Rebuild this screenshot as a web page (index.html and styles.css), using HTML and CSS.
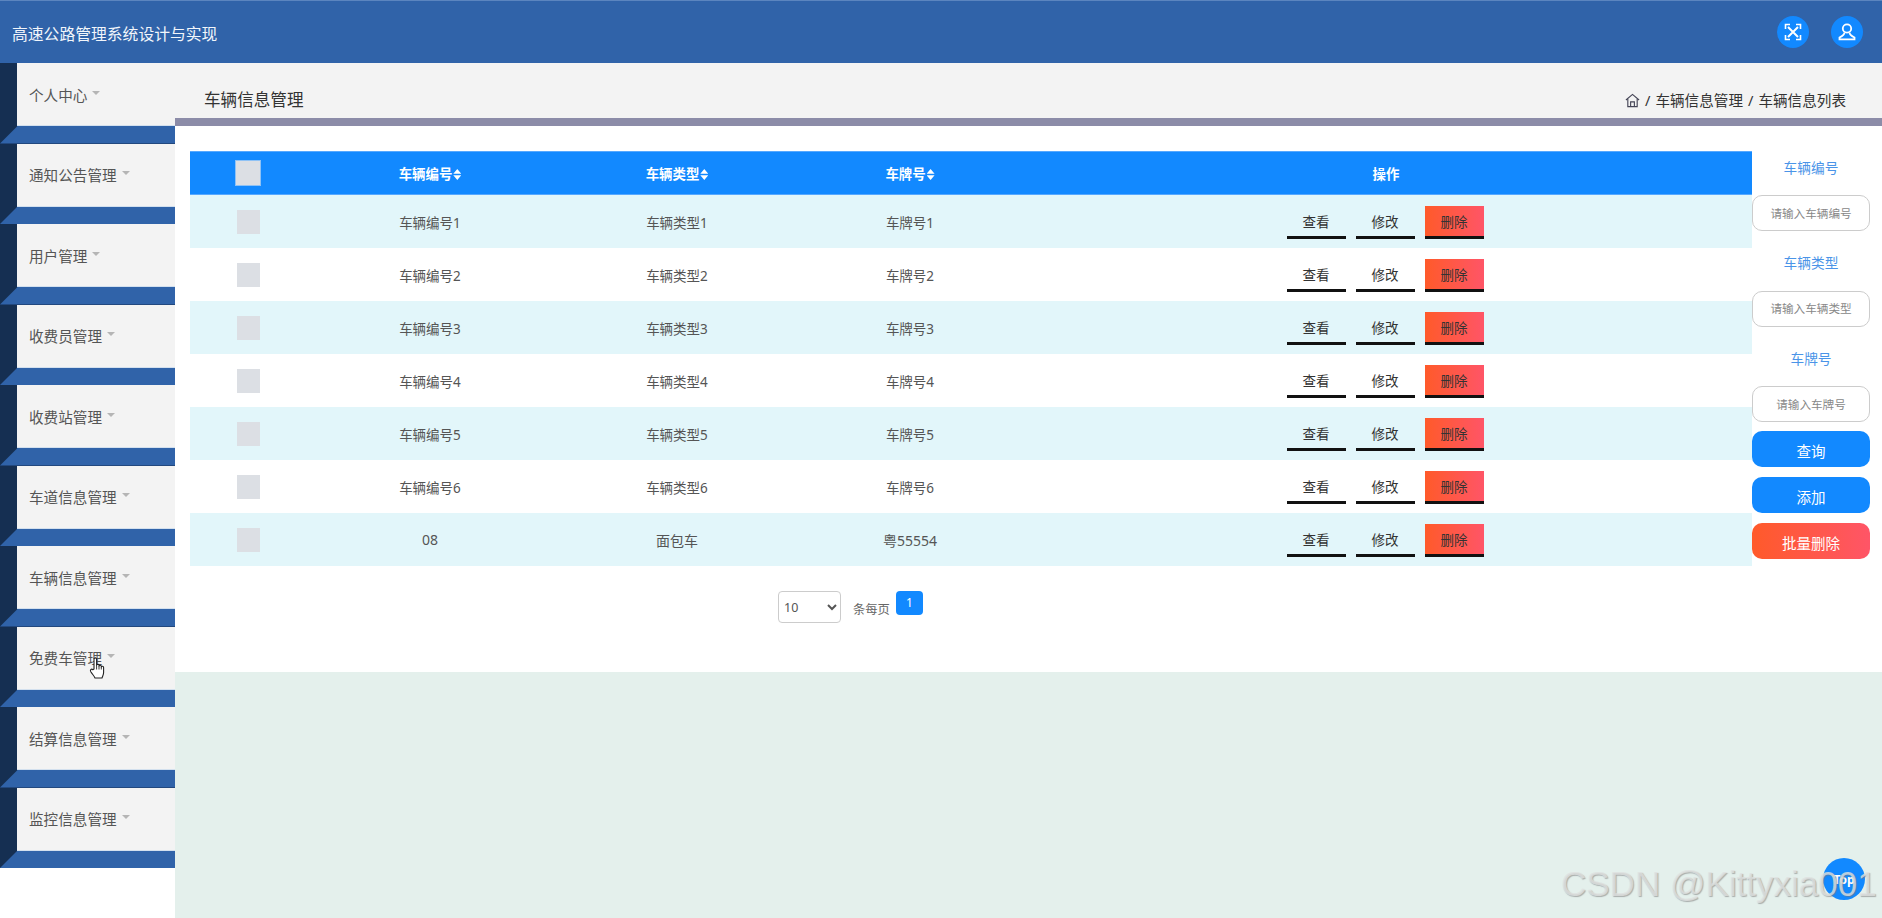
FILE: index.html
```html
<!DOCTYPE html>
<html lang="zh">
<head>
<meta charset="utf-8">
<title>高速公路管理系统设计与实现</title>
<link rel="stylesheet" href="styles.css">
</head>
<body>
<div class="page">
  <header class="topbar">
    <div class="brand">高速公路管理系统设计与实现</div>
    <div class="top-actions">
      <span class="round-icon">
        <svg viewBox="0 0 20 20" width="20" height="20" fill="none" stroke="#fff" stroke-width="1.8"><path d="M5 5l10 10M15 5L5 15" stroke-width="2"/><path d="M2.500 7V2.500H7M13 2.500h4.500V7M2.500 13v4.500H7M13 17.500h4.500V13" stroke-width="1.600"/></svg>
      </span>
      <span class="round-icon">
        <svg viewBox="0 0 20 20" width="20" height="20" fill="none" stroke="#fff" stroke-width="1.800"><circle cx="10" cy="6.500" r="4.200"/><path d="M7.500 10.500c0 2-2 3.500-5 5v1.800h15v-1.800c-3-1.500-5-3-5-5"/></svg>
      </span>
    </div>
  </header>
  <div class="layout">
    <nav class="sidebar">
      <div class="nav-block"><div class="nav-item">个人中心<i class="caret"></i></div><div class="nav-band"></div></div>
      <div class="nav-block"><div class="nav-item">通知公告管理<i class="caret"></i></div><div class="nav-band"></div></div>
      <div class="nav-block"><div class="nav-item">用户管理<i class="caret"></i></div><div class="nav-band"></div></div>
      <div class="nav-block"><div class="nav-item">收费员管理<i class="caret"></i></div><div class="nav-band"></div></div>
      <div class="nav-block"><div class="nav-item">收费站管理<i class="caret"></i></div><div class="nav-band"></div></div>
      <div class="nav-block"><div class="nav-item">车道信息管理<i class="caret"></i></div><div class="nav-band"></div></div>
      <div class="nav-block"><div class="nav-item">车辆信息管理<i class="caret"></i></div><div class="nav-band"></div></div>
      <div class="nav-block"><div class="nav-item">免费车管理<i class="caret"></i></div><div class="nav-band"></div></div>
      <div class="nav-block"><div class="nav-item">结算信息管理<i class="caret"></i></div><div class="nav-band"></div></div>
      <div class="nav-block"><div class="nav-item">监控信息管理<i class="caret"></i></div><div class="nav-band"></div></div>
    </nav>
    <main class="main">
      <div class="crumbbar">
        <div class="crumb-title">车辆信息管理</div>
        <div class="crumbs">
          <svg class="home" viewBox="0 0 16 16" width="15" height="15" fill="none" stroke="#445" stroke-width="1.200"><path d="M1 7.500L8 1.500l7 6"/><path d="M3 6.500V14.500H13V6.500"/><path d="M6 14.500V9.500H10V14.500"/></svg>
          <span>/</span><span>车辆信息管理</span><span>/</span><span>车辆信息列表</span>
        </div>
      </div>
      <section class="panel">
        <div class="list">
          <table class="grid">
            <colgroup><col class="c0"><col class="c1"><col class="c2"><col class="c3"><col></colgroup>
            <thead>
              <tr>
                <th><span class="check"></span></th>
                <th>车辆编号<i class="sort"></i></th>
                <th>车辆类型<i class="sort"></i></th>
                <th>车牌号<i class="sort"></i></th>
                <th>操作</th>
              </tr>
            </thead>
            <tbody>
              <tr><td><span class="check"></span></td><td>车辆编号1</td><td>车辆类型1</td><td>车牌号1</td><td><div class="ops"><a class="op">查看</a><a class="op">修改</a><a class="op del">删除</a></div></td></tr>
              <tr><td><span class="check"></span></td><td>车辆编号2</td><td>车辆类型2</td><td>车牌号2</td><td><div class="ops"><a class="op">查看</a><a class="op">修改</a><a class="op del">删除</a></div></td></tr>
              <tr><td><span class="check"></span></td><td>车辆编号3</td><td>车辆类型3</td><td>车牌号3</td><td><div class="ops"><a class="op">查看</a><a class="op">修改</a><a class="op del">删除</a></div></td></tr>
              <tr><td><span class="check"></span></td><td>车辆编号4</td><td>车辆类型4</td><td>车牌号4</td><td><div class="ops"><a class="op">查看</a><a class="op">修改</a><a class="op del">删除</a></div></td></tr>
              <tr><td><span class="check"></span></td><td>车辆编号5</td><td>车辆类型5</td><td>车牌号5</td><td><div class="ops"><a class="op">查看</a><a class="op">修改</a><a class="op del">删除</a></div></td></tr>
              <tr><td><span class="check"></span></td><td>车辆编号6</td><td>车辆类型6</td><td>车牌号6</td><td><div class="ops"><a class="op">查看</a><a class="op">修改</a><a class="op del">删除</a></div></td></tr>
              <tr class="real"><td><span class="check"></span></td><td>08</td><td>面包车</td><td>粤55554</td><td><div class="ops"><a class="op">查看</a><a class="op">修改</a><a class="op del">删除</a></div></td></tr>
            </tbody>
          </table>
          <div class="pager">
            <select class="size"><option>10</option><option>20</option></select>
            <span class="per">条每页</span>
            <span class="pageno">1</span>
          </div>
        </div>
        <aside class="filters">
          <label class="f-label">车辆编号</label>
          <input class="f-input" placeholder="请输入车辆编号">
          <label class="f-label">车辆类型</label>
          <input class="f-input" placeholder="请输入车辆类型">
          <label class="f-label">车牌号</label>
          <input class="f-input" placeholder="请输入车牌号">
          <div class="f-buttons">
            <button class="f-btn">查询</button>
            <button class="f-btn">添加</button>
            <button class="f-btn danger">批量删除</button>
          </div>
        </aside>
      </section>
    </main>
  </div>
  <div class="totop">Top</div>
  <div class="watermark">CSDN @Kittyxia001</div>
  <svg class="cursor" viewBox="1 0 16 24" width="19" height="24"><path d="M5.500 13V3.200c0-1.800 2.600-1.800 2.600 0V9c0-1 2.400-1 2.400 0v1c0-1 2.300-1 2.300.2v.8c0-1 2.300-1 2.300.4v5.100c0 2.500-1.100 3.600-1.600 5.500H6.500c-.7-2-2.200-3.200-4.200-6.300-1.200-2 .9-3.300 2-1.900z" fill="#fff" stroke="#222" stroke-width="1.100" stroke-linejoin="round"/><path d="M8.100 9v4.500M10.500 10v3.500M12.800 11v2.500" stroke="#222" stroke-width=".9" fill="none"/></svg>
</div>
</body>
</html>
```
FILE: styles.css
```css
* { box-sizing: border-box; }
html, body { margin: 0; padding: 0; height: 100%; overflow: hidden; }
body {
  font-family: "Noto Sans", "Noto Sans CJK SC", sans-serif;
  color: #555;
  background: #fff;
}
.page { position: relative; width: 1882px; height: 918px; overflow: hidden; display: flex; flex-direction: column; }

.topbar {
  height: 63px;
  flex: none;
  background: #3063a9;
  border-top: 1px solid #5b85bf;
  display: flex;
  align-items: center;
  justify-content: space-between;
  padding: 0 19px 0 12px;
}
.brand { color: #f2f6fb; font-size: 15.8px; line-height: 20px; padding-top: 4px; }
.top-actions { display: flex; gap: 22px; }
.round-icon {
  width: 32px; height: 32px; border-radius: 50%;
  background: #1289ff;
  display: flex; align-items: center; justify-content: center;
}

.layout { flex: 1; display: flex; min-height: 0; }

.sidebar { width: 175px; flex: none; }
.nav-block { height: 80.5px; }
.nav-item {
  height: 63px;
  padding-left: 29px;
  padding-bottom: 1px;
  display: flex;
  align-items: center;
  background:
    linear-gradient(#d3e0ee, #d3e0ee) 17px 100% / 100% 1px no-repeat,
    linear-gradient(90deg, #152f52 17px, #f3f3f3 17px);
  font-size: 14.6px;
  color: #555;
}
.caret {
  display: inline-block;
  margin-left: 5px;
  margin-bottom: 3px;
  border-left: 4.500px solid transparent;
  border-right: 4.500px solid transparent;
  border-top: 4.500px solid #b5b5b5;
}
.nav-band { height: 17.5px; background: #152f52; }
.nav-band::before {
  content: "";
  display: block;
  height: 100%;
  background: #3063a9;
  clip-path: polygon(17.5px 0, 100% 0, 100% 100%, 0 100%);
}

.main { flex: 1; min-width: 0; background: #e4f0ec; }
.crumbbar {
  height: 63px;
  background: #f3f3f3;
  border-bottom: 8px solid #8c8ca8;
  display: flex;
  align-items: flex-end;
  justify-content: space-between;
  padding: 0 36px 6px 29px;
}
.crumb-title { font-size: 16.600px; line-height: 24px; color: #333; }
.crumbs { display: flex; align-items: center; gap: 5px; font-size: 14.600px; line-height: 24px; color: #333; }
.home { margin-right: 0; }

.panel {
  height: 546px;
  background: #fff;
  padding: 25px 12px 0 15px;
  display: flex;
}
.list { width: 1562px; flex: none; }
.grid { width: 100%; border-collapse: collapse; table-layout: fixed; font-size: 13.500px; }
.c0 { width: 114px; }
.c1 { width: 252px; }
.c2 { width: 242px; }
.c3 { width: 224px; }
.grid th {
  height: 44px; padding: 0;
  background: #1289ff;
  box-shadow: inset 0 1px 0 #56a8ff, inset 0 -1px 0 #56a8ff;
  color: #fff;
  font-weight: 700;
  font-size: 13.400px;
  text-align: center;
}
.grid td { height: 53px; padding: 0; text-align: center; color: #555; }
.grid th:last-child { padding-right: 2px; }
.grid td:last-child { padding-right: 4px; }
.grid tbody tr:nth-child(odd) td { background: #e2f6fa; }
.real td { font-size: 14px; }
.check { display: inline-block; width: 23px; height: 24px; margin-left: 2px; background: #dcdfe4; vertical-align: middle; }
thead .check { width: 24px; margin-left: 1px; box-shadow: 0 0 0 1px #8fc2f5; }
.sort {
  display: inline-block;
  width: 8px; height: 11px;
  margin-left: 1px;
  vertical-align: -1px;
  background: #fff;
  clip-path: polygon(50% 0, 100% 44%, 0 44%, 50% 0, 0 56%, 100% 56%, 50% 100%, 0 56%);
}
.ops { display: flex; justify-content: center; gap: 10px; padding-top: 2px; }
.op {
  width: 59px; height: 33px;
  border-bottom: 3px solid #111;
  font-size: 13.500px;
  line-height: 32px;
  color: #333;
  display: block;
}
.op.del { background: linear-gradient(90deg, #ff5a2a, #ff5567); }

.pager { display: flex; align-items: flex-start; margin: 25px 0 0 588px; }
.size {
  width: 63px; height: 32px;
  border: 1px solid #ccc; border-radius: 4px;
  background: #fff;
  color: #555;
  font-family: "Noto Sans", sans-serif;
  font-size: 12.500px;
  padding-left: 1px;
}
.per { margin: 10px 6px 0 12px; font-size: 12.300px; line-height: 18px; color: #666; }
.pageno {
  width: 27px; height: 24px;
  background: #1289ff; border-radius: 4px;
  color: #fff; font-size: 12px; line-height: 23px; text-align: center;
}

.filters { width: 118px; flex: none; display: flex; flex-direction: column; }
.f-label { display: block; height: 44px; line-height: 34px; text-align: center; font-size: 13.700px; color: #4a94e8; }
.f-label ~ .f-label { height: 59.500px; line-height: 63px; }
.f-input {
  width: 118px; height: 36px;
  border: 1px solid #ccc; border-radius: 10px;
  background: #fff;
  padding: 0;
  text-align: center;
  font-family: inherit;
  font-size: 11.600px;
  outline: none;
}
.f-input::placeholder { color: #888; opacity: 1; }
.f-buttons { display: flex; flex-direction: column; gap: 10px; margin-top: 9px; }
.f-btn {
  width: 118px; height: 36px;
  border: 0; border-radius: 10px;
  background: #1289ff;
  color: #fff;
  font-family: inherit;
  font-size: 14.500px;
  padding: 2px 0 0;
}
.f-btn.danger { background: linear-gradient(90deg, #ff5a2a, #ff5567); }

.totop {
  position: absolute; left: 1823px; top: 858px;
  width: 42px; height: 42px; border-radius: 50%;
  background: #1289ff;
  color: #fff; font-size: 12px; font-weight: 700;
  line-height: 44px; text-align: center;
}
.watermark {
  position: absolute; left: 1561px; top: 864px;
  font-family: "Liberation Sans", Arial, sans-serif;
  font-size: 35px; line-height: 40px;
  color: rgba(224, 226, 225, .78);
  text-shadow: 1px 1px 1px rgba(120, 120, 120, .55);
  white-space: nowrap;
}
.cursor { position: absolute; left: 88px; top: 656px; }
```
